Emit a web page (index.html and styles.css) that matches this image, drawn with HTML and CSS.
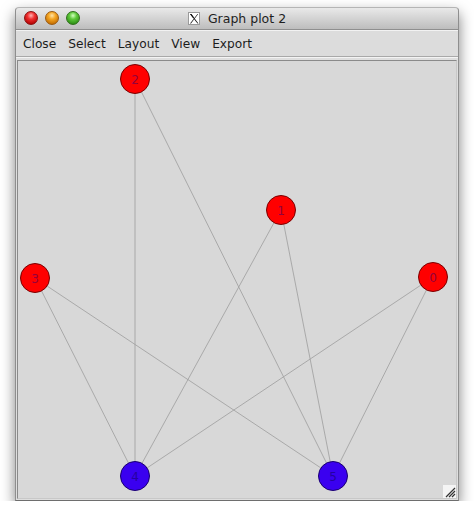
FILE: index.html
```html
<!DOCTYPE html>
<html>
<head>
<meta charset="utf-8">
<title>Graph plot 2</title>
<link rel="stylesheet" href="styles.css">
</head>
<body>
<div class="window">
  <div class="titlebar">
    <div class="lights">
      <span class="light red"></span>
      <span class="light orange"></span>
      <span class="light green"></span>
    </div>
    <div class="title">
      <svg class="xicon" width="12" height="13" viewBox="0 0 12 13">
        <rect x="0.5" y="0.5" width="11" height="12" fill="#fff" stroke="#9a9a9a"/>
        <path d="M2 2 L9.5 11.5 L10.5 11.5 L3.2 2 Z" fill="#111"/>
        <path d="M9.5 2 L2 11.5 L3 11.5 L10.2 2 Z" fill="#111"/>
        <path d="M2 2 L5 6 L6 5.4 L3.5 2 Z" fill="#111"/>
      </svg>
      <span>Graph plot 2</span>
    </div>
  </div>
  <div class="menubar">
    <span class="menu">Close</span>
    <span class="menu">Select</span>
    <span class="menu">Layout</span>
    <span class="menu">View</span>
    <span class="menu">Export</span>
  </div>
  <div class="canvas-wrap">
    <div class="canvas">
      <svg class="graph" width="438" height="437" viewBox="18 60 438 437">
        <g class="edges">
          <line x1="135" y1="78" x2="135" y2="475"/>
          <line x1="135" y1="78" x2="333" y2="475"/>
          <line x1="281" y1="209" x2="135" y2="475"/>
          <line x1="281" y1="209" x2="333" y2="475"/>
          <line x1="35" y1="277" x2="135" y2="475"/>
          <line x1="35" y1="277" x2="333" y2="475"/>
          <line x1="433" y1="276" x2="135" y2="475"/>
          <line x1="433" y1="276" x2="333" y2="475"/>
        </g>
        <g class="node red-node">
          <circle cx="135" cy="78" r="14.5"/>
          <text x="135" y="82.5">2</text>
        </g>
        <g class="node red-node">
          <circle cx="281" cy="209" r="14.5"/>
          <text x="281" y="213.5">1</text>
        </g>
        <g class="node red-node">
          <circle cx="35" cy="277" r="14.5"/>
          <text x="35" y="281.5">3</text>
        </g>
        <g class="node red-node">
          <circle cx="433" cy="276" r="14.5"/>
          <text x="433" y="280.5">0</text>
        </g>
        <g class="node blue-node">
          <circle cx="135" cy="475" r="14.5"/>
          <text x="135" y="479.5">4</text>
        </g>
        <g class="node blue-node">
          <circle cx="333" cy="475" r="14.5"/>
          <text x="333" y="479.5">5</text>
        </g>
      </svg>
      <div class="grip">
        <svg width="13" height="13" viewBox="0 0 13 13">
          <path d="M3 12 L12 3 M6 12 L12 6 M9 12 L12 9" stroke="#333" stroke-width="1.2"/>
        </svg>
      </div>
    </div>
  </div>
</div>
</body>
</html>
```

FILE: styles.css
```css
html, body {
  margin: 0;
  padding: 0;
  background: #ffffff;
}

body {
  padding: 7px 15px 0 15px;
  font-family: "DejaVu Sans", "Liberation Sans", sans-serif;
}

.window {
  width: 442px;
  border: 1px solid #8e8e8e;
  border-top-color: #b5b5b5;
  border-bottom-color: #6e6e6e;
  background: #d9d9d9;
  box-shadow: 0 6px 14px rgba(0, 0, 0, 0.5);
  border-radius: 4px 4px 0 0;
}

.titlebar {
  height: 22px;
  position: relative;
  display: flex;
  align-items: center;
  justify-content: center;
  background: linear-gradient(#e9e9e9, #bdbdbd);
  border-radius: 4px 4px 0 0;
  border-bottom: 1px solid #8f8f8f;
  box-sizing: border-box;
}

.lights {
  position: absolute;
  left: 8px;
  top: 3px;
  display: flex;
  gap: 7px;
}

.light {
  width: 14px;
  height: 14px;
  border-radius: 50%;
  box-sizing: border-box;
}

.light.red {
  background: radial-gradient(circle at 50% 30%, #ffb3b3 0, #f03030 35%, #b00000 85%);
  border: 1px solid #8a1010;
}

.light.orange {
  background: radial-gradient(circle at 50% 30%, #ffe4a8 0, #f5a623 35%, #c06a00 85%);
  border: 1px solid #9a5a10;
}

.light.green {
  background: radial-gradient(circle at 50% 30%, #d4ffc0 0, #5ec93a 35%, #2a8a12 85%);
  border: 1px solid #2f6f1a;
}

.title {
  display: flex;
  align-items: center;
  gap: 8px;
  font-size: 12.5px;
  color: #1e1e1e;
}

.xicon {
  display: block;
}

.menubar {
  display: flex;
  align-items: center;
  gap: 12px;
  padding-left: 7px;
  background: #dcdcdc;
  border-top: 1px solid #f2f2f2;
  border-bottom: 1px solid #a9a9a9;
  box-sizing: border-box;
  height: 27px;
  font-size: 12.2px;
  color: #1c1c1c;
}

.canvas-wrap {
  padding: 2px 1px 1px 1px;
  background: #dedede;
  border-top: 1px solid #f4f4f4;
}

.canvas {
  position: relative;
  width: 438px;
  height: 437px;
  border: 1px solid #8a8a8a;
  border-right-color: #c8c8c8;
  border-bottom-color: #c8c8c8;
  background: #d8d8d8;
}

.graph {
  display: block;
}

.edges line {
  stroke: #a0a0a0;
  stroke-width: 0.85;
}

.node circle {
  stroke-width: 1;
}

.red-node circle {
  fill: #ff0000;
  stroke: #7a0000;
}

.blue-node circle {
  fill: #3a00f0;
  stroke: #1a0070;
}

.node text {
  font-family: "DejaVu Sans", sans-serif;
  font-size: 12px;
  text-anchor: middle;
}

.red-node text {
  fill: #96003c;
}

.blue-node text {
  fill: #2600a2;
}

.grip {
  position: absolute;
  right: 0;
  bottom: 0;
  width: 13px;
  height: 13px;
  background: #f4f4f4;
}

.grip svg {
  display: block;
}
```
